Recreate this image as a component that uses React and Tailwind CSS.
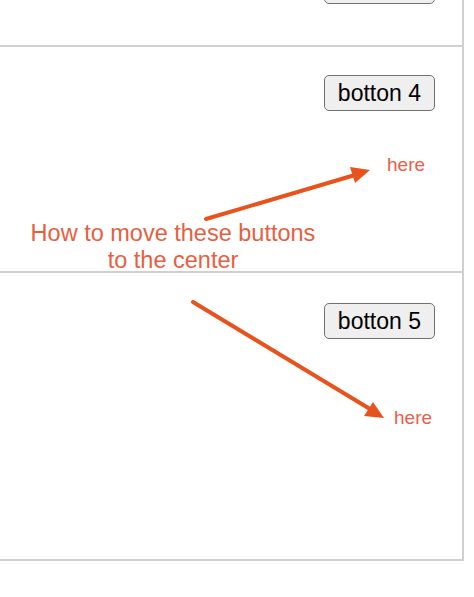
const panels = [
  { id: 3, label: "", box: "h-[47px] items-end pb-[41px]" },
  { id: 4, label: "botton 4", box: "h-[226px] items-start pt-[28px]" },
  { id: 5, label: "botton 5", box: "h-[288px] items-start pt-[30px]" },
]

const Panel = ({ label, box }) => (
  <div className={`flex justify-end pr-[27px] border-b-2 border-[#d0d0d0] ${box}`}>
    <button className="shrink-0 min-w-[111px] h-[36px] px-[13px] rounded-[5px] border border-[#707070] bg-[#efefef] text-[23px] leading-[26px] text-black">
      {label}
    </button>
  </div>
)

// orange call-out arrows drawn over the panels
const Arrows = () => (
  <svg className="absolute inset-0 pointer-events-none" width="474" height="597" viewBox="0 0 474 597">
    <line x1="206" y1="219" x2="355" y2="175" stroke="#e8521d" strokeWidth="4" strokeLinecap="round" />
    <polygon points="370,170 355,183 350,167" fill="#e8521d" />
    <line x1="193" y1="302" x2="370" y2="409" stroke="#e8521d" strokeWidth="4" strokeLinecap="round" />
    <polygon points="384,418 364,416 373,402" fill="#e8521d" />
  </svg>
)

export default function App() {
  return (
    <div className="relative w-[474px] h-[597px] overflow-hidden bg-white" style={{ fontFamily: '"Liberation Sans", Arial, sans-serif' }}>
      <div className="w-[464px] border-r-2 border-[#d0d0d0]">
        {panels.map((p) => (
          <Panel key={p.id} {...p} />
        ))}
      </div>

      <Arrows />

      <p className="absolute left-[387px] top-[151px] text-[19px] text-[#e6604a]">here</p>
      <p className="absolute left-[394px] top-[404px] text-[19px] text-[#e6604a]">here</p>
      <p className="absolute left-[18px] top-[220px] w-[310px] text-center text-[23.5px] leading-[27px] text-[#e6603f]">
        How to move these buttons
        <br />
        to the center
      </p>
    </div>
  )
}
